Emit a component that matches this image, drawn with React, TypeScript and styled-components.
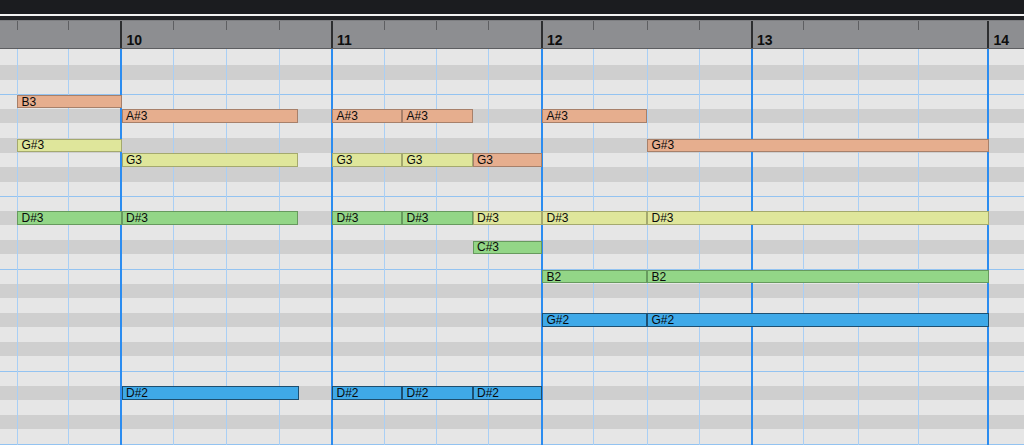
import styled, { createGlobalStyle } from 'styled-components';

const GlobalStyle = createGlobalStyle`
    html, body {
        margin: 0;
        padding: 0;
        background: #1b1c1f;
        overflow: hidden;
    }
    * {
        box-sizing: border-box;
    }
`;

// geometry measured from the editor
const ROW_H = 14.57;
const OCTAVE_LINE_Y = 45.3; // B3 row top, relative to the roll
const FIRST_ROW_H = OCTAVE_LINE_Y - 2 * ROW_H;

type Tone = 'salmon' | 'yellow' | 'green' | 'blue';

const tones: Record<Tone, { fill: string; edge: string }> = {
    salmon: { fill: '#e6ae8e', edge: '#a7806a' },
    yellow: { fill: '#dfe69b', edge: '#a4a96e' },
    green: { fill: '#93d687', edge: '#679a5e' },
    blue: { fill: '#3fa9e8', edge: '#1e4f70' },
};

const rows = [
    'D4', 'C#4', 'C4', 'B3', 'A#3', 'A3', 'G#3', 'G3', 'F#3', 'F3', 'E3', 'D#3', 'D3',
    'C#3', 'C3', 'B2', 'A#2', 'A2', 'G#2', 'G2', 'F#2', 'F2', 'E2', 'D#2', 'D2',
    'C#2', 'C2', 'B1',
];

const bars = [
    { label: '10', x: 120.5 },
    { label: '11', x: 331 },
    { label: '12', x: 541 },
    { label: '13', x: 751 },
    { label: '14', x: 987.5 },
];

const beats = [16.5, 68, 173, 226, 279, 384, 435.5, 488, 593, 646.5, 699, 803, 858, 918];

// pitch, start x, end x, tone
const notes: [string, number, number, Tone][] = [
    ['B3', 17, 121.5, 'salmon'],
    ['A#3', 121.5, 298, 'salmon'],
    ['A#3', 332, 402, 'salmon'],
    ['A#3', 402, 472.5, 'salmon'],
    ['A#3', 542, 647, 'salmon'],
    ['G#3', 17, 121.5, 'yellow'],
    ['G#3', 647, 989, 'salmon'],
    ['G3', 121.5, 298, 'yellow'],
    ['G3', 332, 402, 'yellow'],
    ['G3', 402, 472.5, 'yellow'],
    ['G3', 472.5, 542, 'salmon'],
    ['D#3', 17, 121.5, 'green'],
    ['D#3', 121.5, 298, 'green'],
    ['D#3', 332, 402, 'green'],
    ['D#3', 402, 472.5, 'green'],
    ['D#3', 472.5, 542, 'yellow'],
    ['D#3', 542, 647, 'yellow'],
    ['D#3', 647, 989, 'yellow'],
    ['C#3', 472.5, 542, 'green'],
    ['B2', 542, 647, 'green'],
    ['B2', 647, 989, 'green'],
    ['G#2', 542, 647, 'blue'],
    ['G#2', 647, 989, 'blue'],
    ['D#2', 121.5, 299, 'blue'],
    ['D#2', 332, 402, 'blue'],
    ['D#2', 402, 472.5, 'blue'],
    ['D#2', 472.5, 542, 'blue'],
];

const Window = styled.div`
    width: 1024px;
    height: 445px;
    display: flex;
    flex-direction: column;
    overflow: hidden;
    background: #1b1c1f;
    font-family: 'Liberation Sans', Arial, sans-serif;
`;

const TitleStrip = styled.div`
    height: 14px;
    background: #1b1c1f;
    flex-shrink: 0;
`;

const Highlight = styled.div`
    height: 2px;
    background: #f2f2f2;
    flex-shrink: 0;
`;

const Spacer = styled.div`
    height: 4px;
    background: #202124;
    flex-shrink: 0;
`;

const Ruler = styled.div`
    position: relative;
    height: 29px;
    flex-shrink: 0;
    background: #8d8e91;
    border-top: 1px solid #7d7e81;
    border-bottom: 1px solid #5d5e61;
`;

const BarTick = styled.div`
    position: absolute;
    top: 0;
    bottom: 0;
    width: 2px;
    background: #2d2e30;
`;

const BeatTick = styled.div`
    position: absolute;
    top: 0;
    height: 9px;
    width: 1px;
    background: #5e5f62;
`;

const BarNumber = styled.span`
    position: absolute;
    bottom: 1px;
    font-size: 14px;
    font-weight: 700;
    color: #0e0e0e;
    line-height: 1;
`;

const Roll = styled.div`
    position: relative;
    flex: 1;
    overflow: hidden;
    display: flex;
    flex-direction: column;
`;

const KeyRow = styled.div<{ $black: boolean; $line: boolean; $h: number }>`
    flex-shrink: 0;
    height: ${(p) => p.$h}px;
    background: ${(p) => (p.$black ? '#cfcfcf' : '#e6e6e6')};
    border-top: ${(p) => (p.$line ? '1px solid #93c3f1' : 'none')};
`;

const BeatLine = styled.div`
    position: absolute;
    top: 0;
    bottom: 0;
    width: 1px;
    background: #a9cff5;
`;

const BarLine = styled.div`
    position: absolute;
    top: 0;
    bottom: 0;
    width: 2px;
    background: #2b8cf0;
`;

const Note = styled.div<{ $tone: Tone }>`
    position: absolute;
    height: 13.6px;
    display: flex;
    align-items: center;
    padding-left: 3.5px;
    background: ${(p) => tones[p.$tone].fill};
    border: 1px solid ${(p) => tones[p.$tone].edge};
    font-size: 12px;
    color: #0a0a0a;
    white-space: nowrap;
    overflow: hidden;
`;

function rowIndex(pitch: string) {
    return rows.indexOf(pitch) - 3;
}

export default function App() {
    return (
        <Window>
            <GlobalStyle />
            <TitleStrip />
            <Highlight />
            <Spacer />
            <Ruler>
                {beats.map((x) => (
                    <BeatTick key={x} style={{ left: x }} />
                ))}
                {bars.map((b) => (
                    <BarTick key={b.label} style={{ left: b.x - 0.5 }} />
                ))}
                {bars.map((b) => (
                    <BarNumber key={'n' + b.label} style={{ left: b.x + 6 }}>
                        {b.label}
                    </BarNumber>
                ))}
            </Ruler>
            <Roll>
                {rows.map((pitch, i) => (
                    <KeyRow
                        key={pitch}
                        $black={pitch.includes('#')}
                        $line={pitch.startsWith('B') || pitch.startsWith('E')}
                        $h={i === 0 ? FIRST_ROW_H : ROW_H}
                    />
                ))}
                {beats.map((x) => (
                    <BeatLine key={x} style={{ left: x }} />
                ))}
                {bars.map((b) => (
                    <BarLine key={b.label} style={{ left: b.x - 0.5 }} />
                ))}
                {notes.map(([pitch, start, end, tone], i) => (
                    <Note
                        key={i}
                        $tone={tone}
                        style={{
                            left: start,
                            width: end - start,
                            top: OCTAVE_LINE_Y + rowIndex(pitch) * ROW_H + 0.6,
                        }}
                    >
                        {pitch}
                    </Note>
                ))}
            </Roll>
        </Window>
    );
}
